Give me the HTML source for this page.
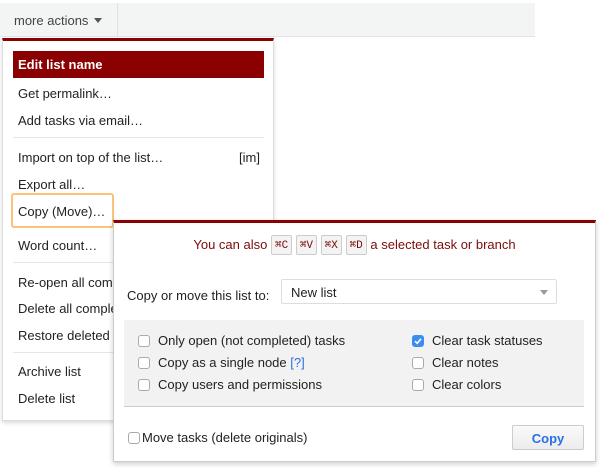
<!DOCTYPE html>
<html><head><meta charset="utf-8"><style>
*{box-sizing:border-box;margin:0;padding:0}
body{width:605px;height:468px;background:#fff;font-family:"Liberation Sans",Arial,sans-serif;font-size:13px;color:#222;position:relative;overflow:hidden}
.bar{position:absolute;left:0;top:3px;width:535px;height:34px;background:#f3f4f4;border-bottom:1px solid #e4e4e4}
.btn{position:absolute;left:0;top:0;width:118px;height:33px;border-right:1px solid #e0e0e0;font-size:13px;color:#444;padding:10px 0 0 14px}
.tri{display:inline-block;width:0;height:0;border-left:4px solid transparent;border-right:4px solid transparent;border-top:5px solid #555;margin-left:6px;vertical-align:2px}
.menu{position:absolute;left:2px;top:38px;width:272px;height:383px;background:#fff;border-top:3px solid #8b0000;border-left:1px solid #ddd;border-right:1px solid #ddd;border-bottom:1px solid #ddd;box-shadow:0 2px 4px rgba(0,0,0,.15)}
.it{position:absolute;left:15px;font-size:13px;color:#222;white-space:nowrap}
.hl{position:absolute;left:10px;top:10px;width:251px;height:27px;background:#8b0000;color:#fff;font-weight:bold;padding:6px 0 0 5px}
.sep{position:absolute;left:10px;width:251px;height:1px;background:#e6e6e6}
.orange{position:absolute;left:8px;top:152px;width:103px;height:35px;border:2px solid #fbc27a;border-radius:3px;background:#fff}
.dlg{position:absolute;left:113px;top:220px;width:483px;height:242px;background:#fff;border-top:3px solid #8b0000;border-left:1px solid #ccc;border-right:1px solid #ccc;border-bottom:1px solid #ccc;box-shadow:0 2px 5px rgba(0,0,0,.2)}
.tip{position:absolute;top:12px;left:0;width:100%;text-align:center;color:#7a0c0c;font-size:13px}
.k{display:inline-block;border:1px solid #ccc;background:#f3f3f3;font-family:"Liberation Mono",monospace;font-size:11px;padding:2px 3px;color:#7a0c0c;border-radius:2px;vertical-align:1px}
.lbl{position:absolute;left:13px;top:65px;font-size:13px}
.sel{position:absolute;left:167px;top:56px;width:276px;height:25px;border:1px solid #ddd;border-radius:2px;padding:5px 0 0 9px;font-size:13px}
.sel .tri{position:absolute;right:8px;top:10px;border-top-color:#999}
.gray{position:absolute;left:10px;top:97px;width:460px;height:87px;background:#f2f2f2;border-bottom:1px solid #ccc}
.cb{position:absolute;font-size:13px;white-space:nowrap}
.box{display:inline-block;width:12px;height:12px;border:1px solid #aaa;border-radius:3px;background:#fff;vertical-align:-2px;margin-right:8px}
.chk{background:#3b8df2;border-color:#3b8df2;position:relative}
.copy{position:absolute;left:398px;top:202px;width:72px;height:25px;border:1px solid #ccc;border-radius:2px;background:linear-gradient(#fafafa,#ececec);color:#2a6ee6;font-size:13px;font-weight:bold;text-align:center;padding-top:5px}
</style></head><body>
<div class="bar"><div class="btn">more actions<span class="tri"></span></div></div>
<div class="menu">
<div class="hl">Edit list name</div>
<div class="it" style="top:45px">Get permalink…</div>
<div class="it" style="top:72px">Add tasks via email…</div>
<div class="sep" style="top:96px"></div>
<div class="it" style="top:109px">Import on top of the list…</div>
<div class="it" style="top:109px;left:236px">[im]</div>
<div class="it" style="top:136px">Export all…</div>
<div class="orange"></div>
<div class="it" style="top:163px">Copy (Move)…</div>
<div class="it" style="top:197px">Word count…</div>
<div class="sep" style="top:221px"></div>
<div class="it" style="top:234px">Re-open all completed</div>
<div class="it" style="top:260px">Delete all completed</div>
<div class="it" style="top:287px">Restore deleted</div>
<div class="sep" style="top:311px"></div>
<div class="it" style="top:323px">Archive list</div>
<div class="it" style="top:350px">Delete list</div>
</div>
<div class="dlg">
<div class="tip">You can also <span class="k">⌘C</span> <span class="k">⌘V</span> <span class="k">⌘X</span> <span class="k">⌘D</span> a selected task or branch</div>
<div class="lbl">Copy or move this list to:</div>
<div class="sel">New list<span class="tri"></span></div>
<div class="gray">
<div class="cb" style="left:14px;top:13px"><span class="box"></span>Only open (not completed) tasks</div>
<div class="cb" style="left:14px;top:35px"><span class="box"></span>Copy as a single node <span style="color:#2a6ee6">[?]</span></div>
<div class="cb" style="left:14px;top:57px"><span class="box"></span>Copy users and permissions</div>
<div class="cb" style="left:288px;top:13px"><span class="box chk"><svg width="10" height="10" style="position:absolute;left:0;top:0" viewBox="0 0 10 10"><path d="M2 5.2 L4.2 7.3 L8 2.8" stroke="#fff" stroke-width="1.6" fill="none"/></svg></span>Clear task statuses</div>
<div class="cb" style="left:288px;top:35px"><span class="box"></span>Clear notes</div>
<div class="cb" style="left:288px;top:57px"><span class="box"></span>Clear colors</div>
</div>
<div class="cb" style="left:14px;top:207px"><span class="box" style="margin-right:2px"></span>Move tasks (delete originals)</div>
<div class="copy">Copy</div>
</div>
</body></html>
